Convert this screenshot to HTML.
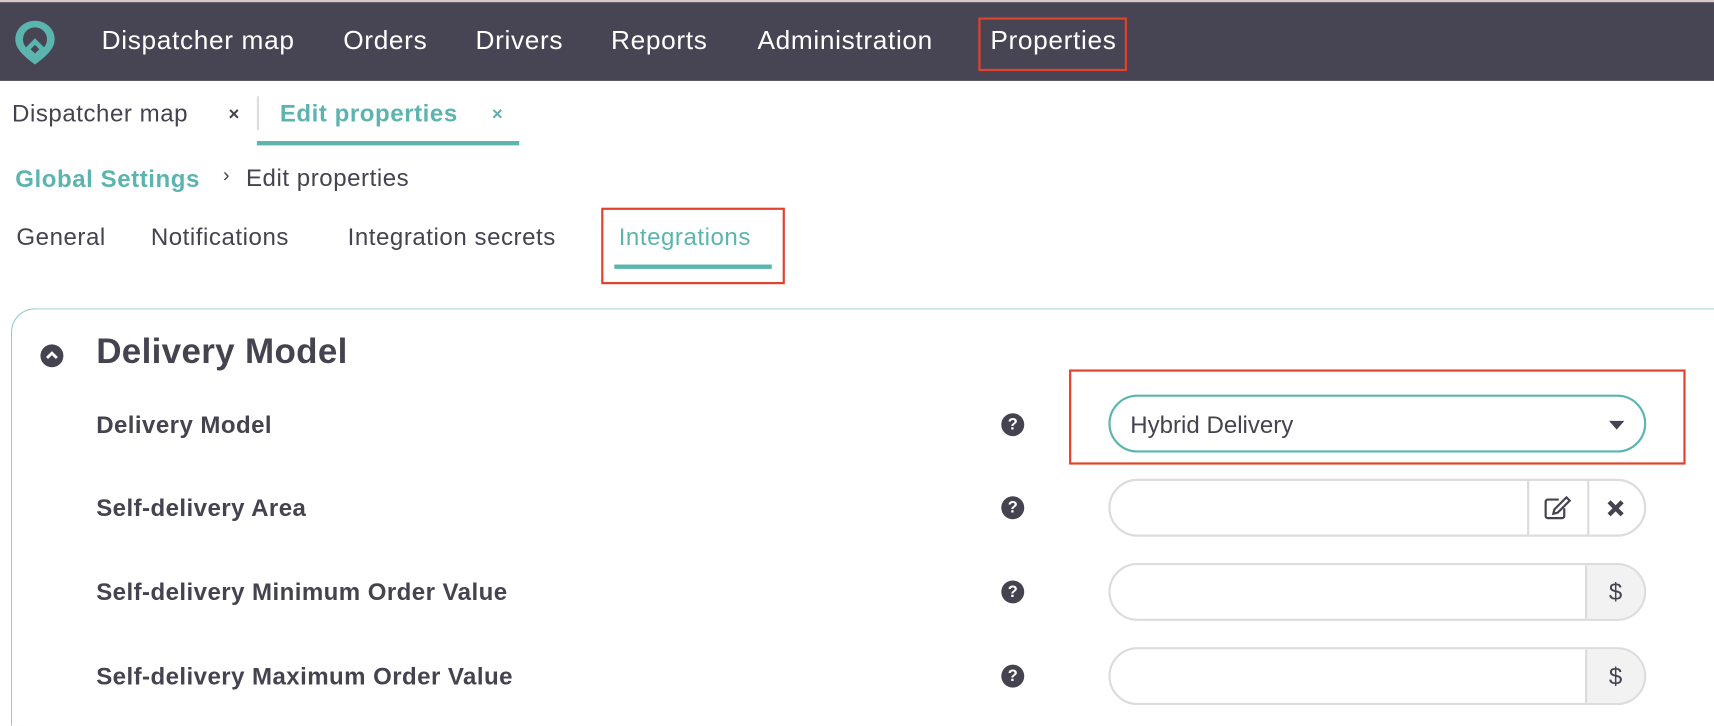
<!DOCTYPE html>
<html><head><meta charset="utf-8"><style>
*{margin:0;padding:0;box-sizing:border-box}
html,body{width:1714px;height:726px;overflow:hidden;background:#fff}
#w{position:absolute;left:0;top:0;width:1568px;height:664px;overflow:hidden;transform:scale(1.09311);transform-origin:0 0;font-family:"Liberation Sans",sans-serif;color:#45434f}
.a{position:absolute;white-space:nowrap}
.nav{position:absolute;left:0;top:2px;width:1568px;height:72px;background:#474554}
.top{position:absolute;left:0;top:0;width:1568px;height:2px;background:#d6c8cd}
.ni{position:absolute;top:22px;font-size:24px;color:#fff;letter-spacing:0.6px}
.red{position:absolute;border:2px solid #e2412b}
.t20{font-size:22px;letter-spacing:0.5px}
.lbl{position:absolute;left:88px;font-size:22px;font-weight:bold;color:#45434f;letter-spacing:0.4px}
.q{position:absolute;left:916px;width:21px;height:21px;border-radius:50%;background:#45434f;color:#fff;font-size:15px;font-weight:bold;text-align:center;line-height:21px}
.inp{position:absolute;left:1014px;width:492px;height:53px;border:2px solid #dcdcdc;border-radius:27px;overflow:hidden}
.add{position:absolute;top:0;right:0;width:54px;height:100%;background:#f2f2f2;border-left:2px solid #dcdcdc;text-align:center;line-height:49px;font-size:22px}
</style></head><body><div id="w">
<div class="top"></div>
<div class="nav">
<svg class="a" style="left:12px;top:15px" width="40" height="44" viewBox="0 0 40 44"><path d="M20 2C10 2 2 9.5 2 19c0 8 7 15 18 23C31 34 38 27 38 19 38 9.5 30 2 20 2z" fill="#5bb5ae"/><circle cx="20" cy="19" r="11" fill="#474554"/><path d="M20 18l9 9-9 9-9-9z" fill="#5bb5ae"/><path d="M20 24l4 4-4 4-4-4z" fill="#474554"/></svg>
<div class="ni" style="left:93px">Dispatcher map</div>
<div class="ni" style="left:314px">Orders</div>
<div class="ni" style="left:435px">Drivers</div>
<div class="ni" style="left:559px">Reports</div>
<div class="ni" style="left:693px">Administration</div>
<div class="ni" style="left:906px">Properties</div>
</div>
<div class="red" style="left:895px;top:16px;width:136px;height:49px"></div>
<div class="a t20" style="left:11px;top:91px">Dispatcher map</div>
<div class="a" style="left:209px;top:95px;font-size:17px;font-weight:bold">×</div>
<div class="a" style="left:235px;top:88px;width:2px;height:31px;background:#ddd"></div>
<div class="a t20" style="left:256px;top:91px;color:#5bb5ae;font-weight:bold">Edit properties</div>
<div class="a" style="left:450px;top:95px;font-size:17px;font-weight:bold;color:#5bb5ae">×</div>
<div class="a" style="left:235px;top:129px;width:240px;height:4px;background:#5bb5ae"></div>
<div class="a t20" style="left:14px;top:151px;color:#5bb5ae;font-weight:bold">Global Settings</div>
<div class="a" style="left:204px;top:150px;font-size:18px">›</div>
<div class="a t20" style="left:225px;top:150px">Edit properties</div>
<div class="a t20" style="left:15px;top:204px">General</div>
<div class="a t20" style="left:138px;top:204px">Notifications</div>
<div class="a t20" style="left:318px;top:204px">Integration secrets</div>
<div class="a t20" style="left:566px;top:204px;color:#5bb5ae">Integrations</div>
<div class="a" style="left:562px;top:242px;width:144px;height:4px;background:#5bb5ae"></div>
<div class="red" style="left:550px;top:190px;width:168px;height:70px"></div>
<div class="a" style="left:10px;top:282px;width:1558px;height:382px;border:1.5px solid #8fd0ca;border-right:none;border-bottom:none;border-radius:22px 0 0 0"></div>
<div class="a" style="left:37px;top:315px;width:21px;height:21px;border-radius:50%;background:#45434f"><svg width="21" height="21"><path d="M6 12.5l4.5-4.5 4.5 4.5" stroke="#fff" stroke-width="2.6" fill="none"/></svg></div>
<div class="a" style="left:88px;top:303px;font-size:32px;font-weight:bold;letter-spacing:0.3px">Delivery Model</div>
<div class="lbl" style="top:376px">Delivery Model</div>
<div class="lbl" style="top:452px">Self-delivery Area</div>
<div class="lbl" style="top:529px">Self-delivery Minimum Order Value</div>
<div class="lbl" style="top:606px">Self-delivery Maximum Order Value</div>
<div class="q" style="top:378px">?</div>
<div class="q" style="top:454px">?</div>
<div class="q" style="top:531px">?</div>
<div class="q" style="top:608px">?</div>
<div class="inp" style="top:361px;border-color:#5bb5ae"><div class="a" style="left:18px;top:13px;font-size:22px">Hybrid Delivery</div><div class="a" style="left:456px;top:22px;width:0;height:0;border-left:7px solid transparent;border-right:7px solid transparent;border-top:8px solid #45434f"></div></div>
<div class="red" style="left:978px;top:338px;width:564px;height:87px"></div>
<div class="inp" style="top:438px"><div class="a" style="left:381px;top:0;width:2px;height:100%;background:#dcdcdc"></div><div class="a" style="left:436px;top:0;width:2px;height:100%;background:#dcdcdc"></div>
<svg class="a" style="left:396px;top:13px" width="26" height="24" viewBox="0 0 26 24"><path d="M14 4H4a2 2 0 0 0-2 2v13a2 2 0 0 0 2 2h13a2 2 0 0 0 2-2v-7" stroke="#45434f" stroke-width="2" fill="none"/><path d="M21 2l3 3-11 11-4 1 1-4z" stroke="#45434f" stroke-width="2" fill="none"/></svg>
<svg class="a" style="left:453px;top:16px" width="18" height="18" viewBox="0 0 18 18"><path d="M3 3l12 12M15 3L3 15" stroke="#45434f" stroke-width="4"/></svg></div>
<div class="inp" style="top:515px"><div class="add">$</div></div>
<div class="inp" style="top:592px"><div class="add">$</div></div>
</div></body></html>
